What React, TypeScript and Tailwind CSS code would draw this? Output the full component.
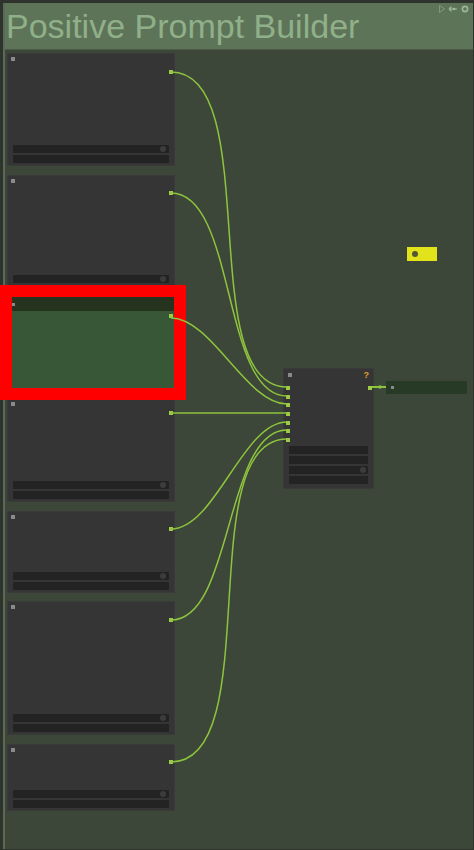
import React from "react";

type NodeDef = { y: number; h: number; out: number };

const nodes: NodeDef[] = [
  { y: 53, h: 113, out: 72 },
  { y: 175, h: 121, out: 193 },
  { y: 398, h: 104, out: 413 },
  { y: 511, h: 82, out: 529 },
  { y: 601, h: 134, out: 620 },
  { y: 744, h: 67, out: 762 },
];

const inputs = [387, 396, 404, 413, 422, 430, 439];

function link(x1: number, y1: number, x2: number, y2: number) {
  const dist = Math.sqrt((x2 - x1) ** 2 + (y2 - y1) ** 2);
  const d = dist * 0.28;
  return `M${x1},${y1} C${x1 + d},${y1} ${x2 - d},${y2} ${x2},${y2}`;
}

function Widget({ dot }: { dot?: boolean }) {
  return (
    <div className="h-[8px] bg-[#232323] rounded-[1px] flex items-center justify-end pr-[3px]">
      {dot && <div className="w-[6px] h-[6px] rounded-full bg-[#3c3c3c]" />}
    </div>
  );
}

export default function App() {
  const starts = [72, 193, 318, 413, 529, 620, 762];
  const links = starts.map((y, i) => link(171, y, 287, inputs[i]));

  return (
    <div
      className="relative w-[474px] h-[850px] bg-[#2e342d] overflow-hidden pl-[3px] pt-[3px]"
      style={{ fontFamily: '"Liberation Sans", Arial, sans-serif' }}
    >
      {/* group */}
      <div className="w-[470px] h-[846px] flex flex-col border-l-2 border-[#5a6a54]">
        <div className="h-[46px] bg-[#5e7459] flex items-start justify-between">
          <div className="text-[34px] leading-none text-[#90b089] ml-[1px] mt-[6px] whitespace-nowrap">Positive Prompt Builder</div>
          <div className="flex items-center gap-[3px] mr-[4px] mt-[2px]">
            <svg width="6" height="8" viewBox="0 0 6 8"><path d="M0.5 0.5 L5.5 4 L0.5 7.5 Z" fill="none" stroke="#8aa285" strokeWidth="0.8" /></svg>
            <svg width="10" height="8" viewBox="0 0 10 8"><path d="M1 4 H9 M1 4 L3.5 1.8 M1 4 L3.5 6.2" stroke="#9db897" strokeWidth="1.2" fill="none" /><circle cx="6" cy="4" r="1.3" fill="#9db897" /></svg>
            <svg width="8" height="8" viewBox="0 0 8 8"><circle cx="4" cy="4" r="2.6" fill="none" stroke="#9db897" strokeWidth="1.6" /></svg>
          </div>
        </div>
        <div className="flex-1 bg-[#3c4639] border-t border-[#4c5a47]" />
      </div>

      {/* left nodes (canvas) */}
      {nodes.map((n, i) => (
        <div
          key={i}
          className="absolute left-[7px] w-[168px] bg-[#353535] border border-[#3a3a3a] flex flex-col"
          style={{ top: n.y, height: n.h }}
        >
          <div className="flex justify-between items-start pl-[3px] pr-[1px] pt-[3px] h-[20px]">
            <div className="w-[4px] h-[4px] bg-[#8a8a8a]" />
            <div className="w-[4px] h-[4px] bg-[#9ccc44]" style={{ marginTop: n.out - n.y - 6 }} />
          </div>
          <div className="flex-1" />
          <div className="flex flex-col gap-[2px] px-[5px] pb-[2px]">
            <Widget dot />
            <Widget />
          </div>
        </div>
      ))}

      {/* highlighted node */}
      <div className="absolute left-0 top-[285px] w-[186px] h-[115px] border-[12px] border-[#ff0000] flex flex-col">
        <div className="h-[14px] bg-[#25331f] flex items-center">
          <div className="w-[3px] h-[3px] bg-[#8a8a8a]" />
        </div>
        <div className="flex-1 bg-[#385737] flex justify-end items-start pr-[1px] pt-[3px]">
          <div className="w-[4px] h-[4px] bg-[#9ccc44]" />
        </div>
      </div>

      {/* center node */}
      <div className="absolute left-[283px] top-[368px] w-[91px] h-[121px] bg-[#353535] border border-[#3a3a3a] flex flex-col">
        <div className="flex justify-between items-start pl-[4px] pr-[4px] pt-[4px] h-[13px]">
          <div className="w-[4px] h-[4px] bg-[#8a8a8a]" />
          <div className="text-[9px] leading-none font-bold text-[#e0a02a] -mt-[2px]">?</div>
        </div>
        <div className="flex justify-between items-start pl-[2px] pr-[1px]">
          <div className="flex flex-col">
            {inputs.map((y, i) => (
              <div
                key={i}
                className="w-[4px] h-[4px] bg-[#9ccc44]"
                style={{ marginTop: i === 0 ? 4 : inputs[i] - inputs[i - 1] - 4 }}
              />
            ))}
          </div>
          <div className="w-[4px] h-[4px] bg-[#9ccc44] mt-[4px]" />
        </div>
        <div className="flex flex-col gap-[2px] px-[5px] mt-[4px]">
          {[0, 1, 2, 3].map((i) => (
            <div key={i} className="h-[8px] bg-[#232323] flex items-center justify-end pr-[2px]">
              {i === 2 && <div className="w-[6px] h-[6px] rounded-full bg-[#3c3c3c]" />}
            </div>
          ))}
        </div>
      </div>

      {/* collapsed right node */}
      <div className="absolute left-[386px] top-[381px] w-[81px] h-[13px] bg-[#263a25] flex items-center pl-[5px]">
        <div className="w-[3px] h-[3px] bg-[#8a8a8a]" />
      </div>

      {/* yellow node */}
      <div className="absolute left-[407px] top-[247px] w-[30px] h-[14px] bg-[#e3e31c] flex items-center pl-[5px]">
        <div className="w-[6px] h-[6px] rounded-full bg-[#555533]" />
      </div>

      {/* links */}
      <svg className="absolute left-0 top-0 pointer-events-none" width="474" height="850" viewBox="0 0 474 850" fill="none">
        {links.map((d, i) => (
          <path key={i} d={d} stroke="#8dc43d" strokeWidth="1.5" />
        ))}
        <path d="M372,387 L386,387" stroke="#8dc43d" strokeWidth="2" />
        <circle cx="380" cy="387" r="1.8" fill="#8dc43d" />
      </svg>
    </div>
  );
}
